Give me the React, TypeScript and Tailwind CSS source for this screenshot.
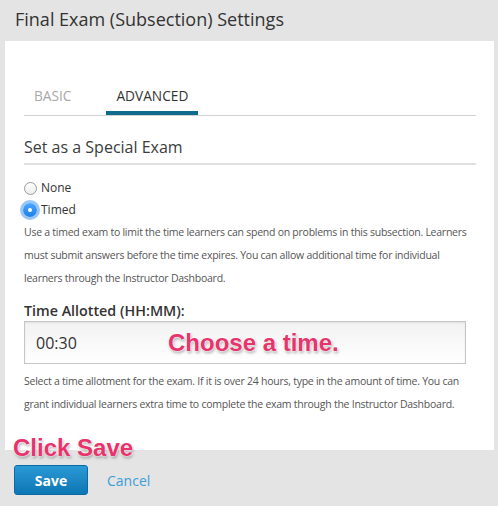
import React from 'react';

const annotation =
  "font-['Liberation_Sans',Arial,sans-serif] font-bold text-[24px] leading-[28px] text-[#e8346c] [text-shadow:0_0_2px_#fff,0_0_2px_#fff,1px_2px_3px_rgba(0,0,0,0.35)]";

function Radio({ checked, label }: { checked?: boolean; label: string }) {
  return (
    <label className="flex h-[22px] items-center gap-[4px] text-[12px] text-[#333]">
      {checked ? (
        <span className="ml-[-1px] flex h-[14px] w-[14px] items-center justify-center rounded-full bg-gradient-to-b from-[#4aa8ff] to-[#1a7fe8] shadow-[0_0_0_3px_rgba(70,150,240,0.55)]">
          <span className="h-[4px] w-[4px] rounded-full bg-white" />
        </span>
      ) : (
        <span className="h-[13px] w-[13px] rounded-full border border-[#9a9a9a] bg-gradient-to-b from-white to-[#ececec]" />
      )}
      <span>{label}</span>
    </label>
  );
}

export default function App() {
  return (
    <div className="h-[506px] w-[498px] overflow-hidden bg-[#e4e4e4] font-['Open_Sans',sans-serif]">
      {/* header */}
      <div className="h-[41px] pl-[15px] pt-[8px] text-[18px] leading-[22px] text-[#333]">
        Final Exam (Subsection) Settings
      </div>

      {/* panel */}
      <div className="ml-[5px] w-[489px] bg-white pb-[34px] pl-[19px] pr-[18px]">
        <div className="pt-[46px]">
          <div className="flex gap-[25px] border-b border-[#d2d2d2] text-[13.7px] leading-[18px]">
            <div className="px-[10px] pb-[10px] text-[#a8a8a8]">BASIC</div>
            <div className="border-b-4 border-[#0f6b8c] px-[10px] pb-[6px] text-[#333]">ADVANCED</div>
          </div>
        </div>

        <div className="mt-[19px] border-b-2 border-[#e0e0e0] pb-[4px] text-[16px] leading-[24px] text-[#3c3c3c]">
          Set as a Special Exam
        </div>

        <div className="mt-[12px]">
          <Radio label="None" />
          <Radio checked label="Timed" />
        </div>

        <p className="text-[10.5px] leading-[23px] tracking-[-0.25px] text-[#555]">
          Use a timed exam to limit the time learners can spend on problems in this subsection. Learners must submit
          answers before the time expires. You can allow additional time for individual learners through the
          Instructor Dashboard.
        </p>

        <div className="mt-[11px] text-[14.3px] font-semibold leading-[20px] text-[#333]">Time Allotted (HH:MM):</div>

        <div className="relative mr-[10px] flex h-[43px] items-center border border-[#c6c6c6] bg-gradient-to-b from-[#f2f2f2] to-white pl-[11px] text-[16px] text-[#333] shadow-[inset_0_1px_2px_rgba(0,0,0,0.08)]">
          00:30
          <span className={`absolute left-[143px] top-[7px] ${annotation}`}>Choose a time.</span>
        </div>

        <p className="mt-[6px] text-[10.5px] leading-[23px] tracking-[-0.25px] text-[#555]">
          Select a time allotment for the exam. If it is over 24 hours, type in the amount of time. You can grant
          individual learners extra time to complete the exam through the Instructor Dashboard.
        </p>
      </div>

      {/* footer */}
      <div className="relative flex items-center gap-[19px] pl-[14px] pt-[15px]">
        <span className={`absolute left-[13px] top-[-16px] ${annotation}`}>Click Save</span>
        <button className="h-[30px] w-[74px] rounded-[3px] border border-[#0b6aa2] bg-gradient-to-b from-[#2a9ad6] to-[#0d76b4] text-[14px] font-bold text-white">
          Save
        </button>
        <span className="text-[14px] text-[#3b9ed8]">Cancel</span>
      </div>
    </div>
  );
}
